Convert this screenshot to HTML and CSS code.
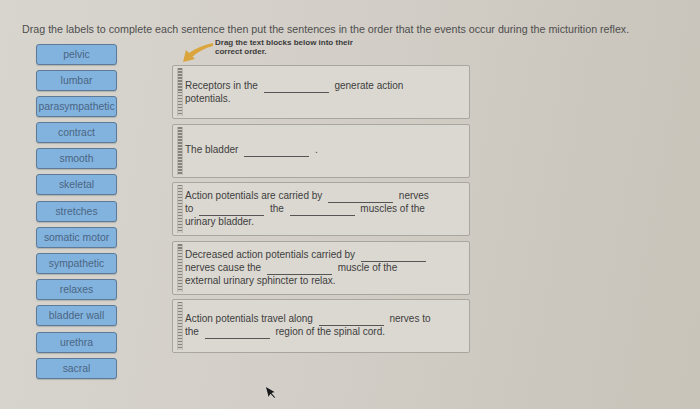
FILE: index.html
```html
<!DOCTYPE html>
<html>
<head>
<meta charset="utf-8">
<link rel="stylesheet" href="styles.css">
</head>
<body>
<div class="page">
  <p class="prompt">Drag the labels to complete each sentence then put the sentences in the order that the events occur during the micturition reflex.</p>
  <div class="work">
    <ul class="bank">
      <li class="chip">pelvic</li>
      <li class="chip">lumbar</li>
      <li class="chip">parasympathetic</li>
      <li class="chip">contract</li>
      <li class="chip">smooth</li>
      <li class="chip">skeletal</li>
      <li class="chip">stretches</li>
      <li class="chip">somatic motor</li>
      <li class="chip">sympathetic</li>
      <li class="chip">relaxes</li>
      <li class="chip">bladder wall</li>
      <li class="chip">urethra</li>
      <li class="chip">sacral</li>
    </ul>
    <div class="order">
      <div class="hint">
        <svg class="hint-arrow" width="32" height="24" viewBox="0 0 32 24">
          <path d="M7 13 Q17 6 31 3 L31 6 Q19 9 10 17 Z" fill="#d9a53c"/>
          <path d="M1 22 L4 10 L13 19 Z" fill="#d9a53c"/>
        </svg>
        <p class="hint-text">Drag the text blocks below into their<br>correct order.</p>
      </div>
      <ol class="sentences">
        <li class="sentence"><span class="grip"></span><div class="text">Receptors in the <span class="blank"></span> generate action<br>potentials.</div></li>
        <li class="sentence"><span class="grip"></span><div class="text">The bladder <span class="blank"></span> .</div></li>
        <li class="sentence"><span class="grip"></span><div class="text">Action potentials are carried by <span class="blank"></span> nerves<br>to <span class="blank"></span> the <span class="blank"></span> muscles of the<br>urinary bladder.</div></li>
        <li class="sentence"><span class="grip"></span><div class="text">Decreased action potentials carried by <span class="blank"></span><br>nerves cause the <span class="blank"></span> muscle of the<br>external urinary sphincter to relax.</div></li>
        <li class="sentence"><span class="grip"></span><div class="text">Action potentials travel along <span class="blank"></span> nerves to<br>the <span class="blank"></span> region of the spinal cord.</div></li>
      </ol>
    </div>
  </div>
  <svg class="cursor" width="10" height="16" viewBox="0 0 10 16">
    <path d="M1 1 L1 13 L4 10 L6.5 15 L8 14.3 L5.6 9.4 L9.5 9.4 Z" fill="#1a1a1a" stroke="#eee" stroke-width="0.6"/>
  </svg>
</div>
</body>
</html>
```
FILE: styles.css
```css
* { box-sizing: border-box; }
html, body { margin: 0; padding: 0; }
body {
  width: 700px;
  height: 409px;
  overflow: hidden;
  font-family: "Liberation Sans", Arial, sans-serif;
  background: linear-gradient(100deg, #d8d5ce 0%, #d3cfc8 45%, #cdc8bf 75%, #c9c4ba 100%);
}
.page {
  position: relative;
  height: 409px;
  padding: 23px 0 0 22px;
}
.prompt {
  margin: 0;
  font-size: 10.7px;
  line-height: 13px;
  color: #4e4e4e;
  white-space: nowrap;
}
.work {
  display: flex;
  margin-top: 1px;
}
.bank {
  list-style: none;
  margin: 6.5px 0 0 14px;
  padding: 0;
  width: 81px;
  display: flex;
  flex-direction: column;
  gap: 5.2px;
}
.chip {
  height: 21px;
  display: flex;
  align-items: center;
  justify-content: center;
  background: #82b3df;
  border: 1px solid #5d7b98;
  border-radius: 3px;
  box-shadow: 0 1px 1px rgba(60, 70, 80, 0.25);
  color: #4a6582;
  font-size: 10.4px;
  white-space: nowrap;
}
.order {
  margin-left: 55px;
  display: flex;
  flex-direction: column;
}
.hint {
  height: 28px;
  display: flex;
  align-items: flex-start;
}
.hint-arrow {
  margin: 3px 0 0 10px;
  flex: none;
}
.hint-text {
  margin: 1px 0 0 1px;
  font-size: 8px;
  line-height: 9px;
  font-weight: bold;
  color: #3a3a3a;
}
.sentences {
  list-style: none;
  margin: 0;
  padding: 0;
  display: flex;
  flex-direction: column;
  gap: 4.5px;
}
.sentence {
  width: 298px;
  height: 54px;
  display: flex;
  align-items: center;
  padding: 2px 4px;
  background: #dbd8d1;
  border: 1px solid #a9a6a0;
  border-radius: 2px;
}
.grip {
  align-self: stretch;
  width: 6px;
  flex: none;
  background: repeating-linear-gradient(180deg, #85827d 0 1.5px, #cfccc5 1.5px 3px);
  border-left: 1px solid #bdbab3;
  border-right: 1px solid #bdbab3;
}
.text {
  margin-left: 2px;
  width: 248px;
  font-size: 10px;
  line-height: 12px;
  color: #3d3d3d;
  white-space: nowrap;
}
.blank {
  display: inline-block;
  width: 65px;
  height: 1px;
  border-bottom: 1px solid #555;
  margin: 0 3px;
  vertical-align: -4px;
}
.cursor {
  position: absolute;
  left: 266px;
  top: 384px;
  transform: rotate(-15deg);
}
```
